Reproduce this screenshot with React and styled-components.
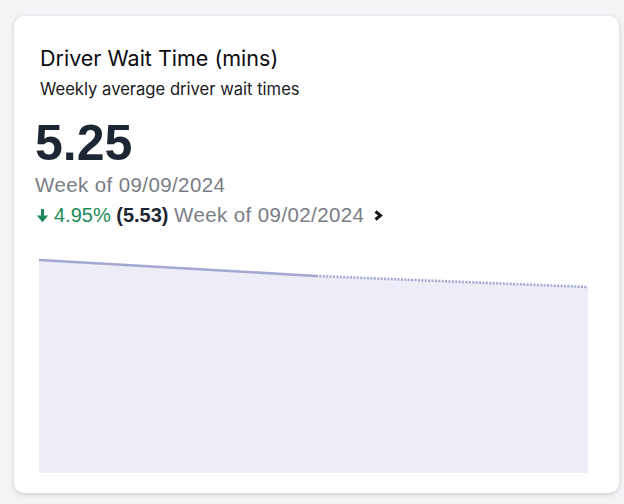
import React from 'react';
import styled, { createGlobalStyle } from 'styled-components';

const Global = createGlobalStyle`
  html, body { margin: 0; padding: 0; background: #f3f4f6; }
  body { font-family: "Liberation Sans", Arial, sans-serif; }
`;

const Page = styled.div`
  padding: 16px 5px 12px 14px;
`;

const Card = styled.div`
  background: #fff;
  border-radius: 10px;
  box-shadow: 0 1px 4px rgba(15, 23, 42, 0.12), 0 2px 6px rgba(15, 23, 42, 0.06);
  box-sizing: border-box;
  padding: 28px 31px 20px 21px;
  display: flex;
  flex-direction: column;
`;

const Header = styled.div`
  padding-left: 5px;
  font-family: Inter, "Noto Sans", sans-serif;
`;

const Title = styled.h2`
  margin: 0;
  font-size: 21.5px;
  font-weight: 400;
  line-height: 28px;
  color: #0b0b0f;
`;

const Subtitle = styled.p`
  margin: 6px 0 0;
  font-size: 16.6px;
  line-height: 22px;
  color: #1a1a24;
`;

const Value = styled.div`
  margin-top: 15px;
  font-size: 50px;
  font-weight: 700;
  line-height: 56px;
  color: #1f2633;
`;

const WeekText = styled.span`
  letter-spacing: 0.4px;
  font-size: 20.5px;
  color: #7a7d85;
`;

const Meta = styled.div`
  margin-top: 2px;
  font-size: 20.5px;
  line-height: 24px;
`;

const Delta = styled.div`
  display: flex;
  align-items: center;
  margin-top: 6px;
  padding-left: 1px;
  font-size: 20px;
  line-height: 24px;
  color: #7a7d85;
  white-space: pre;
`;

const Green = styled.span`
  color: #1b8a5a;
  display: inline-flex;
  align-items: center;
`;

const Arrow = styled.svg`
  flex-shrink: 0;
  width: 13px;
  height: 15px;
  margin-right: 5px;
`;

const Prev = styled.span`
  color: #1f2633;
  font-weight: 700;
`;

const Chevron = styled.svg`
  flex-shrink: 0;
  width: 11px;
  height: 13px;
  margin-left: 9px;
`;

const Chart = styled.svg`
  display: block;
  flex-shrink: 0;
  margin-top: 32px;
  margin-left: 4px;
`;

export default function App() {
  const w = 549;
  const h = 214;
  const p0 = [0, 1];
  const p1 = [277, 17];
  const p2 = [549, 28];
  return (
    <>
      <Global />
      <Page>
        <Card>
          <Header>
            <Title>Driver Wait Time (mins)</Title>
            <Subtitle>Weekly average driver wait times</Subtitle>
          </Header>
          <Value>5.25</Value>
          <Meta>
            <WeekText>Week of 09/09/2024</WeekText>
          </Meta>
          <Delta>
            <Green>
              <Arrow viewBox="0 0 13 15">
                <path d="M6.5 1v8.5" stroke="#1b8a5a" strokeWidth="3" />
                <path d="M0.8 7.6L6.5 14.2l5.7-6.6z" fill="#1b8a5a" />
              </Arrow>
              4.95%
            </Green>
            <span> </span>
            <Prev>(5.53)</Prev>
            <span> </span>
            <WeekText>Week of 09/02/2024</WeekText>
            <Chevron viewBox="0 0 11 13" fill="none">
              <path d="M2.5 2.5L7.5 6.5 2.5 10.5" stroke="#111" strokeWidth="3" />
            </Chevron>
          </Delta>
          <Chart width={w} height={h} viewBox={`0 0 ${w} ${h}`}>
            <path
              d={`M${p0[0]} ${p0[1]} L${p1[0]} ${p1[1]} L${p2[0]} ${p2[1]} L${w} ${h} L0 ${h} Z`}
              fill="#ecedf6"
            />
            <path d={`M${p0[0]} ${p0[1]} L${p1[0]} ${p1[1]}`} stroke="#a5a8d3" strokeWidth="2.6" fill="none" />
            <path
              d={`M${p1[0]} ${p1[1]} L${p2[0]} ${p2[1]}`}
              stroke="#a5a8d3"
              strokeWidth="2.6"
              strokeDasharray="2 1.4"
              fill="none"
            />
          </Chart>
        </Card>
      </Page>
    </>
  );
}
